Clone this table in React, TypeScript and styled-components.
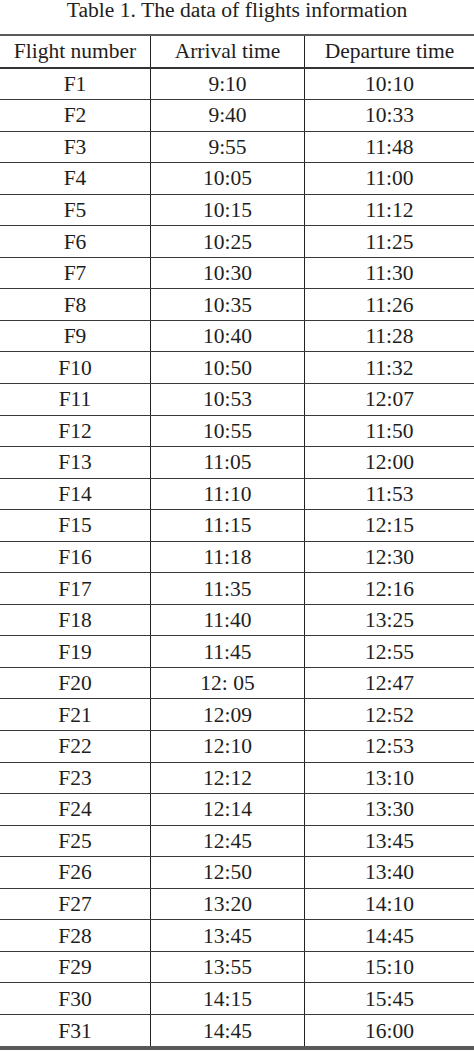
import React from "react";
import styled, { createGlobalStyle } from "styled-components";

const GlobalStyle = createGlobalStyle`
  html, body { margin: 0; padding: 0; background: #ffffff; }
  body { font-family: "Liberation Serif", "Times New Roman", serif; color: #1c1c1c; }
`;

const Page = styled.div`
  width: 474px;
  display: flex;
  flex-direction: column;
`;

const Title = styled.div`
  height: 34px;
  font-size: 21.6px;
  line-height: 21px;
  text-align: center;
  color: #222;
`;

const Table = styled.div`
  display: flex;
  flex-direction: column;
  border-top: 2.5px solid #5a5a5a;
  border-bottom: 4px solid #585858;
`;

const Row = styled.div<{ $header?: boolean; $last?: boolean }>`
  display: grid;
  grid-template-columns: 150px 154px 1fr;
  box-sizing: border-box;
  height: ${(p) => (p.$header ? "32.5px" : "31.55px")};
  border-bottom: ${(p) => (p.$last ? "none" : p.$header ? "2px solid #333" : "1.5px solid #3a3a3a")};
`;

const Cell = styled.div<{ $divider?: boolean }>`
  display: flex;
  align-items: center;
  justify-content: center;
  font-size: 21.5px;
  line-height: 21px;
  color: #1e1e1e;
  border-left: ${(p) => (p.$divider ? "1.5px solid #222" : "none")};
  padding-top: 1px;
`;

const data: [string, string, string][] = [
  ["F1", "9:10", "10:10"],
  ["F2", "9:40", "10:33"],
  ["F3", "9:55", "11:48"],
  ["F4", "10:05", "11:00"],
  ["F5", "10:15", "11:12"],
  ["F6", "10:25", "11:25"],
  ["F7", "10:30", "11:30"],
  ["F8", "10:35", "11:26"],
  ["F9", "10:40", "11:28"],
  ["F10", "10:50", "11:32"],
  ["F11", "10:53", "12:07"],
  ["F12", "10:55", "11:50"],
  ["F13", "11:05", "12:00"],
  ["F14", "11:10", "11:53"],
  ["F15", "11:15", "12:15"],
  ["F16", "11:18", "12:30"],
  ["F17", "11:35", "12:16"],
  ["F18", "11:40", "13:25"],
  ["F19", "11:45", "12:55"],
  ["F20", "12: 05", "12:47"],
  ["F21", "12:09", "12:52"],
  ["F22", "12:10", "12:53"],
  ["F23", "12:12", "13:10"],
  ["F24", "12:14", "13:30"],
  ["F25", "12:45", "13:45"],
  ["F26", "12:50", "13:40"],
  ["F27", "13:20", "14:10"],
  ["F28", "13:45", "14:45"],
  ["F29", "13:55", "15:10"],
  ["F30", "14:15", "15:45"],
  ["F31", "14:45", "16:00"],
];

export default function App() {
  return (
    <>
      <GlobalStyle />
      <Page>
        <Title>Table 1. The data of flights information</Title>
        <Table>
          <Row $header>
            <Cell>Flight number</Cell>
            <Cell $divider>Arrival time</Cell>
            <Cell $divider>Departure time</Cell>
          </Row>
          {data.map((r, i) => (
            <Row key={r[0]} $last={i === data.length - 1}>
              <Cell>{r[0]}</Cell>
              <Cell $divider>{r[1]}</Cell>
              <Cell $divider>{r[2]}</Cell>
            </Row>
          ))}
        </Table>
      </Page>
    </>
  );
}
